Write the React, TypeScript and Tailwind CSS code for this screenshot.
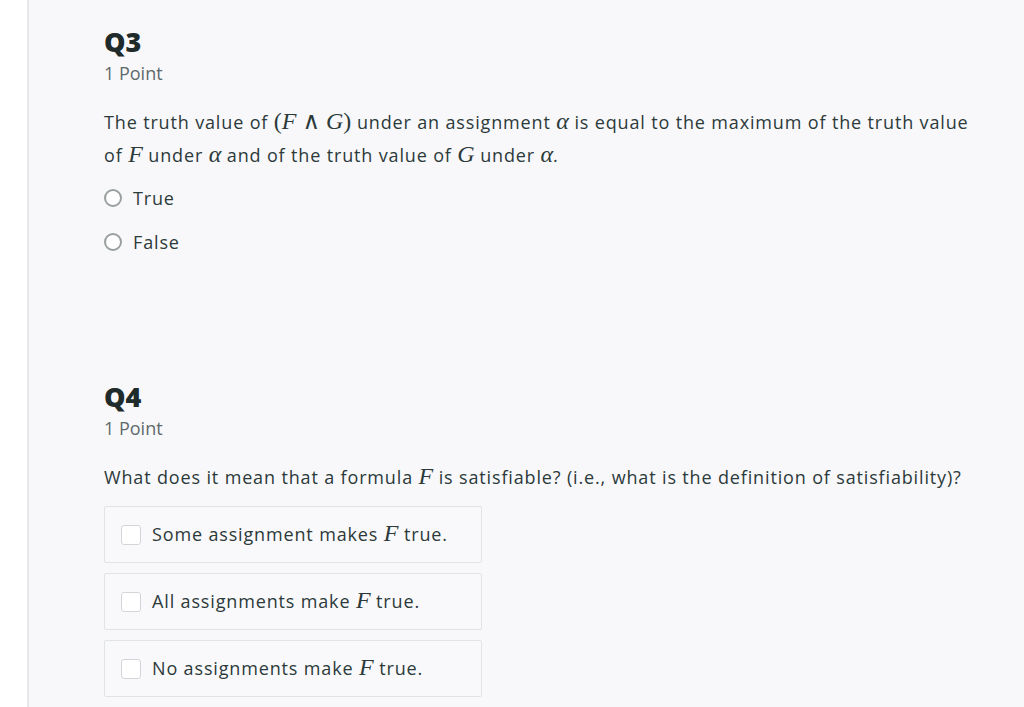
import React from "react";

const serif = { fontFamily: '"Liberation Serif", "DejaVu Serif", serif' };

const M = ({ children }: { children: React.ReactNode }) => (
  <span className="italic text-[24px] leading-none tracking-normal" style={serif}>
    {children}
  </span>
);

const R = ({ children }: { children: React.ReactNode }) => (
  <span className="text-[24px] leading-none tracking-normal" style={serif}>
    {children}
  </span>
);

function Radio({ label }: { label: string }) {
  return (
    <label className="flex items-center gap-[11px] h-[44px]">
      <span className="w-[18px] h-[18px] rounded-full border-2 border-[#9aa0a0] bg-white" />
      <span>{label}</span>
    </label>
  );
}

function Check({ children }: { children: React.ReactNode }) {
  return (
    <div className="w-[378px] h-[57px] border border-[#e1e4e6] rounded-[2px] flex items-center pl-[16px] gap-[11px] bg-[#f9f9fb]">
      <span className="w-[20px] h-[20px] rounded-[3px] border border-[#d2d6d8] bg-white" />
      <span>{children}</span>
    </div>
  );
}

export default function App() {
  return (
    <div
      className="flex min-h-[707px] bg-white text-[#2c3a3a] text-[18px] tracking-[0.85px]"
      style={{ fontFamily: '"Open Sans", "Noto Sans", sans-serif' }}
    >
      <div className="w-[27px] shrink-0 bg-white" />
      <div className="flex-1 bg-[#f8f8fa] border-l-2 border-[#e6e7ea] pl-[75px] pt-[26px]">
        <h2 className="text-[27px] font-extrabold text-[#1f2b2b] leading-[32px] tracking-normal">Q3</h2>
        <div className="text-[#5f6a6c] leading-[30px] tracking-normal">1 Point</div>
        <p className="mt-[18px] leading-[33px]">
          The truth value of{" "}
          <R>(</R>
          <M>F</M>
          <R>{"\u2005∧\u2005"}</R>
          <M>G</M>
          <R>)</R> under an assignment <M>α</M> is equal to the maximum of the truth value
          <br />
          of <M>F</M> under <M>α</M> and of the truth value of <M>G</M> under <M>α</M>.
        </p>
        <div className="mt-[4px] flex flex-col">
          <Radio label="True" />
          <Radio label="False" />
        </div>

        <h2 className="mt-[117px] text-[27px] font-extrabold text-[#1f2b2b] leading-[32px] tracking-normal">Q4</h2>
        <div className="text-[#5f6a6c] leading-[30px] tracking-normal">1 Point</div>
        <p className="mt-[18px] leading-[33px]">
          What does it mean that a formula <M>F</M> is satisfiable? (i.e., what is the definition of satisfiability)?
        </p>
        <div className="mt-[12px] flex flex-col gap-[10px]">
          <Check>
            Some assignment makes <M>F</M> true.
          </Check>
          <Check>
            All assignments make <M>F</M> true.
          </Check>
          <Check>
            No assignments make <M>F</M> true.
          </Check>
        </div>
      </div>
    </div>
  );
}
